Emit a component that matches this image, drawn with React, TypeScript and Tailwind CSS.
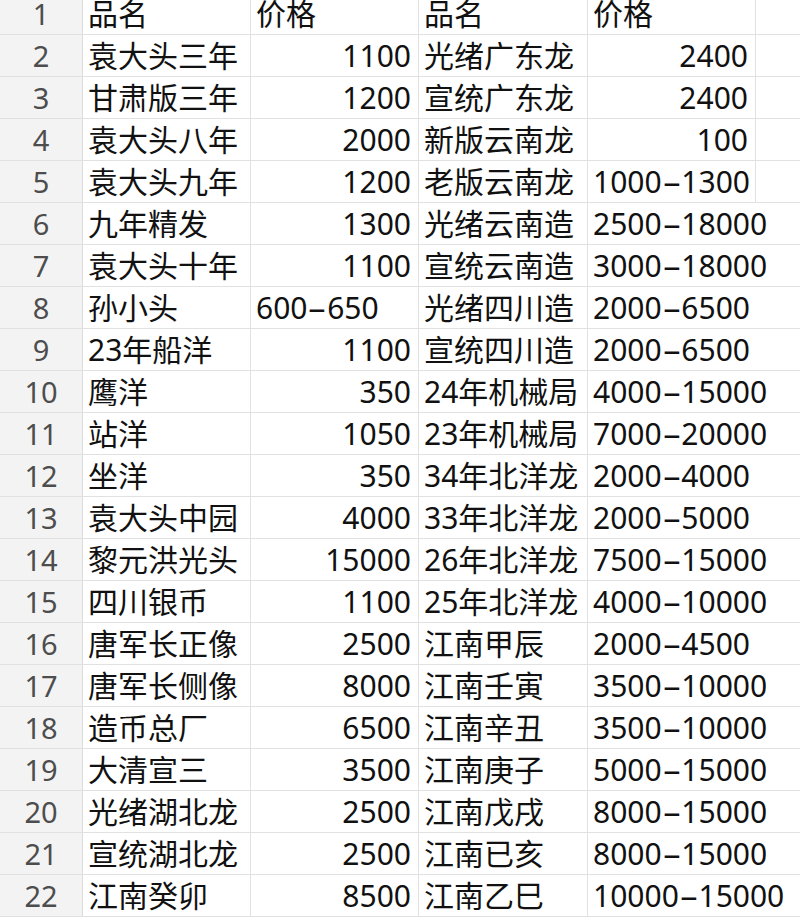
import React from 'react';

type Cell = string | number;

interface Row {
    name1: string;
    price1: Cell;
    name2: string;
    price2: Cell;
}

const ROWS: Row[] = [
    { name1: '品名', price1: '价格', name2: '品名', price2: '价格' },
    { name1: '袁大头三年', price1: 1100, name2: '光绪广东龙', price2: 2400 },
    { name1: '甘肃版三年', price1: 1200, name2: '宣统广东龙', price2: 2400 },
    { name1: '袁大头八年', price1: 2000, name2: '新版云南龙', price2: 100 },
    { name1: '袁大头九年', price1: 1200, name2: '老版云南龙', price2: '1000-1300' },
    { name1: '九年精发', price1: 1300, name2: '光绪云南造', price2: '2500-18000' },
    { name1: '袁大头十年', price1: 1100, name2: '宣统云南造', price2: '3000-18000' },
    { name1: '孙小头', price1: '600-650', name2: '光绪四川造', price2: '2000-6500' },
    { name1: '23年船洋', price1: 1100, name2: '宣统四川造', price2: '2000-6500' },
    { name1: '鹰洋', price1: 350, name2: '24年机械局', price2: '4000-15000' },
    { name1: '站洋', price1: 1050, name2: '23年机械局', price2: '7000-20000' },
    { name1: '坐洋', price1: 350, name2: '34年北洋龙', price2: '2000-4000' },
    { name1: '袁大头中园', price1: 4000, name2: '33年北洋龙', price2: '2000-5000' },
    { name1: '黎元洪光头', price1: 15000, name2: '26年北洋龙', price2: '7500-15000' },
    { name1: '四川银币', price1: 1100, name2: '25年北洋龙', price2: '4000-10000' },
    { name1: '唐军长正像', price1: 2500, name2: '江南甲辰', price2: '2000-4500' },
    { name1: '唐军长侧像', price1: 8000, name2: '江南壬寅', price2: '3500-10000' },
    { name1: '造币总厂', price1: 6500, name2: '江南辛丑', price2: '3500-10000' },
    { name1: '大清宣三', price1: 3500, name2: '江南庚子', price2: '5000-15000' },
    { name1: '光绪湖北龙', price1: 2500, name2: '江南戊戌', price2: '8000-15000' },
    { name1: '宣统湖北龙', price1: 2500, name2: '江南已亥', price2: '8000-15000' },
    { name1: '江南癸卯', price1: 8500, name2: '江南乙巳', price2: '10000-15000' },
];

// numbers sit right, text and ranges sit left, like a sheet does
const align = (v: Cell) => (typeof v === 'number' ? 'justify-end pr-[7px]' : 'justify-start pl-[5px]');

// the sheet's font draws a longer dash in price ranges
const Value = ({ v }: { v: Cell }) => {
    if (typeof v === 'number' || !/^\d+-\d+$/.test(v)) return <>{v}</>;
    const [lo, hi] = v.split('-');
    return (
        <>
            {lo}
            <span className="inline-block mx-[5px] scale-x-200">-</span>
            {hi}
        </>
    );
};

export default function App() {
    return (
        <div
            className="w-[800px] h-[921px] overflow-hidden bg-white text-[#111]"
            style={{ fontFamily: '"Noto Sans", "Noto Sans CJK SC", sans-serif' }}
        >
            <div className="-mt-[7px] flex flex-col">
                {ROWS.map((row, i) => {
                    const overflow = typeof row.price2 === 'string' && i >= 5;
                    return (
                        <div key={i} className="flex h-[42px] border-b border-[#e1e1e1] text-[30px] leading-none">
                            <div className="w-[83px] shrink-0 flex items-center justify-center bg-[#f3f3f3] border-r border-[#dcdcdc] text-[29px] text-[#4d4d4d]">
                                {i + 1}
                            </div>
                            <div className="w-[168px] shrink-0 flex items-center pl-[5px] border-r border-[#e1e1e1] whitespace-nowrap">
                                {row.name1}
                            </div>
                            <div className={`w-[168px] shrink-0 flex items-center border-r border-[#e1e1e1] whitespace-nowrap ${align(row.price1)}`}>
                                <Value v={row.price1} />
                            </div>
                            <div className="w-[169px] shrink-0 flex items-center pl-[5px] border-r border-[#e1e1e1] whitespace-nowrap">
                                {row.name2}
                            </div>
                            <div
                                className={`w-[168px] shrink-0 flex items-center whitespace-nowrap ${align(row.price2)} ${
                                    overflow ? 'overflow-visible' : 'border-r border-[#e1e1e1]'
                                }`}
                            >
                                <Value v={row.price2} />
                            </div>
                            <div className="flex-1" />
                        </div>
                    );
                })}
            </div>
        </div>
    );
}
